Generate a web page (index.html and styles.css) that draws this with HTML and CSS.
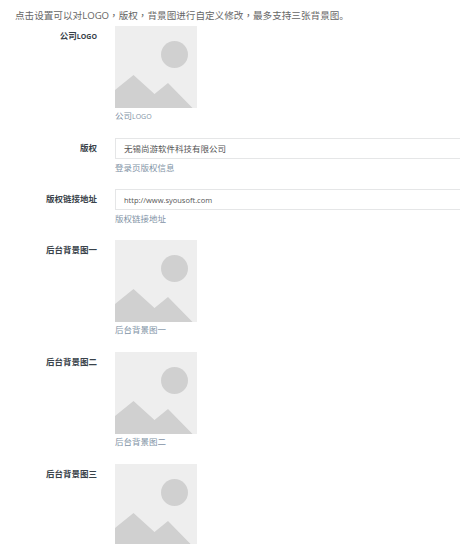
FILE: index.html
```html
<!DOCTYPE html>
<html lang="zh-CN">
<head>
<meta charset="utf-8">
<title>设置</title>
<link rel="stylesheet" href="styles.css">
</head>
<body>
<svg class="defs" width="0" height="0" aria-hidden="true">
  <symbol id="placeholder" viewBox="0 0 82 82">
    <rect width="82" height="82" fill="#eeeeee"/>
    <circle cx="59.5" cy="28.5" r="13.5" fill="#d0d0d0"/>
    <path d="M0 64 L18.5 49 L39.5 68 L53 57 L77.5 82 L0 82 Z" fill="#d0d0d0"/>
  </symbol>
</svg>
<p class="intro">点击设置可以对LOGO<span class="comma" lang="zh-TW">，</span>版权<span class="comma" lang="zh-TW">，</span>背景图进行自定义修改<span class="comma" lang="zh-TW">，</span>最多支持三张背景图。</p>
<div class="form">
  <div class="row row-img">
    <div class="label">公司<span class="latin">LOGO</span></div>
    <div class="field">
      <svg class="thumb"><use href="#placeholder"/></svg>
      <div class="help">公司<span class="latin">LOGO</span></div>
    </div>
  </div>
  <div class="row row-input">
    <div class="label">版权</div>
    <div class="field">
      <div class="input">无锡尚游软件科技有限公司</div>
      <div class="help">登录页版权信息</div>
    </div>
  </div>
  <div class="row row-input">
    <div class="label">版权链接地址</div>
    <div class="field">
      <div class="input"><span class="url">http://www.syousoft.com</span></div>
      <div class="help">版权链接地址</div>
    </div>
  </div>
  <div class="row row-img">
    <div class="label">后台背景图一</div>
    <div class="field">
      <svg class="thumb"><use href="#placeholder"/></svg>
      <div class="help">后台背景图一</div>
    </div>
  </div>
  <div class="row row-img">
    <div class="label">后台背景图二</div>
    <div class="field">
      <svg class="thumb"><use href="#placeholder"/></svg>
      <div class="help">后台背景图二</div>
    </div>
  </div>
  <div class="row row-last">
    <div class="label">后台背景图三</div>
    <div class="field">
      <svg class="thumb"><use href="#placeholder"/></svg>
    </div>
  </div>
</div>
</body>
</html>
```
FILE: styles.css
```css
html, body {
  margin: 0;
  padding: 0;
  height: 544px;
  overflow: hidden;
  background: #fff;
  font-family: "Open Sans", "Noto Sans CJK SC", sans-serif;
}
.defs {
  display: block;
  height: 0;
}
.intro {
  margin: 0;
  padding: 7px 0 0 15px;
  height: 19px;
  font-size: 9.6px;
  line-height: 17px;
  color: #666;
  white-space: nowrap;
}
.comma {
  font-family: "Noto Sans CJK TC", sans-serif;
}
.latin {
  font-size: 7px;
}
.url {
  font-size: 7.5px;
}
.row {
  display: grid;
  grid-template-columns: 97px 345px;
  column-gap: 18px;
}
.row-img {
  height: 112px;
}
.row-last {
  height: 80px;
}
.row-input {
  height: 51px;
}
.row-input .label {
  padding-top: 4px;
}
.row-img .label,
.row-last .label {
  padding-top: 4px;
}
.label {
  text-align: right;
  font-size: 8.5px;
  line-height: 12px;
  font-weight: 700;
  color: #39424a;
}
.thumb {
  display: block;
  width: 82px;
  height: 82px;
}
.input {
  box-sizing: border-box;
  height: 21px;
  padding-left: 8px;
  border: 1px solid #e5e6e7;
  border-right: 0;
  font-size: 8.5px;
  line-height: 19px;
  color: #555;
}
.help {
  margin-top: 3px;
  font-size: 8.5px;
  line-height: 12px;
  color: #7f93a6;
}
.row-img .help {
  margin-top: 2px;
}
```
